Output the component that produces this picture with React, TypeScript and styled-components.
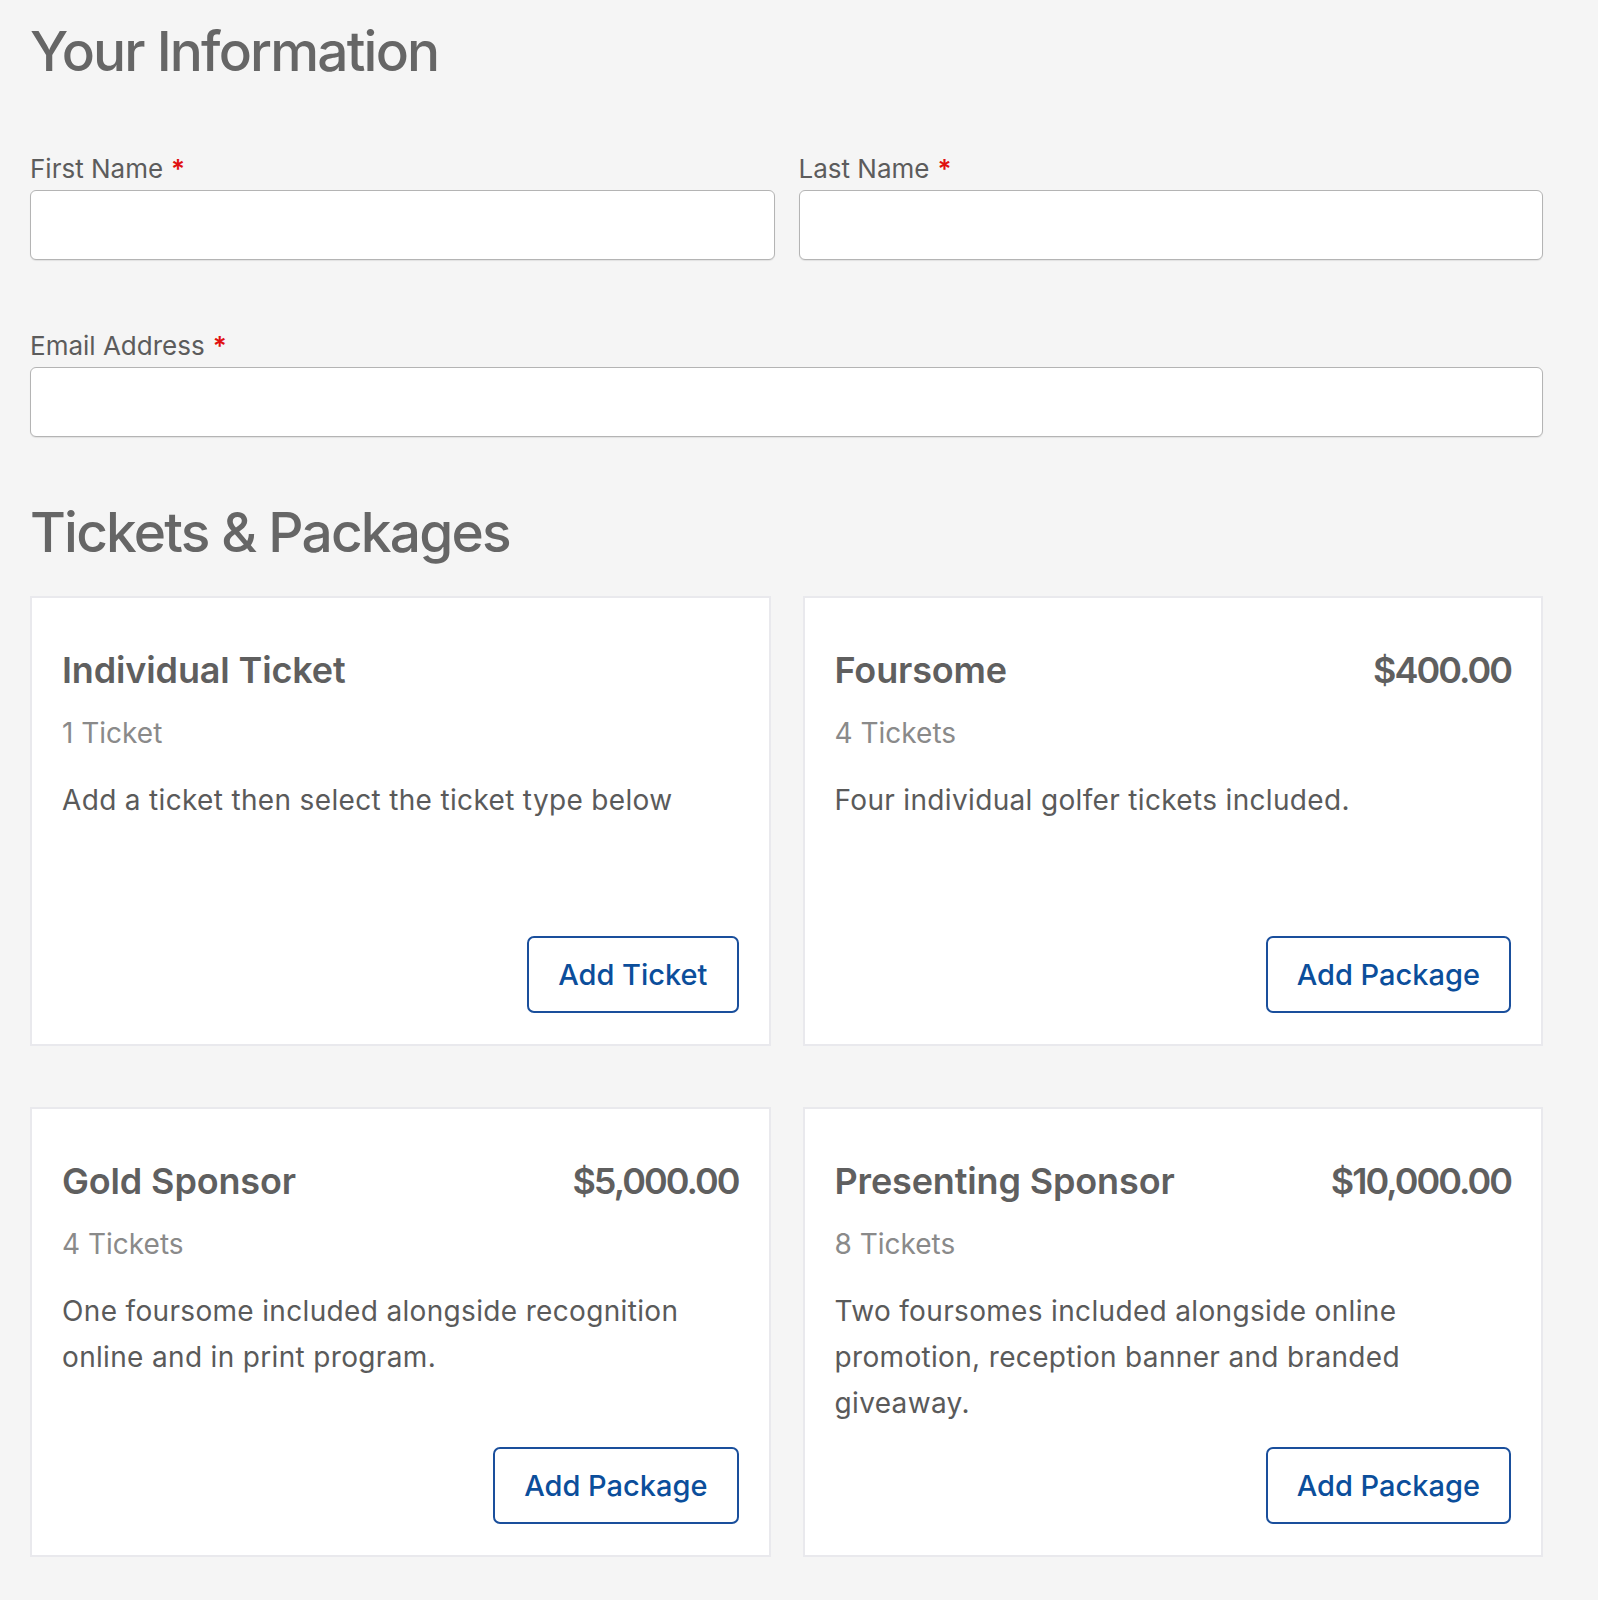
import React, { FC } from 'react';
import styled, { createGlobalStyle } from 'styled-components';

const GlobalStyle = createGlobalStyle`
  html, body {
    margin: 0;
    padding: 0;
    background: #f5f5f5;
  }
  body {
    font-family: Inter, "Noto Sans", "Liberation Sans", sans-serif;
    -webkit-font-smoothing: antialiased;
  }
  * {
    box-sizing: border-box;
  }
`;

const Page = styled.div`
  width: 1513px;
  margin-left: 30px;
  padding-top: 18px;
  padding-bottom: 43px;
`;

const SectionTitle = styled.h1<{ $gap: number }>`
  margin: 0 0 ${(p) => p.$gap}px;
  font-size: 55px;
  line-height: 66px;
  font-weight: 500;
  letter-spacing: -0.033em;
  color: #666666;
`;

const FieldRow = styled.div`
  display: grid;
  grid-template-columns: 1fr 1fr;
  column-gap: 24px;
  margin-bottom: 70px;
`;

const Field = styled.div`
  display: flex;
  flex-direction: column;
`;

const Label = styled.label`
  font-size: 26px;
  line-height: 32px;
  color: #5c5c5c;
  margin-bottom: 5px;
`;

const Required = styled.span`
  color: #e01010;
  margin-left: 8px;
  font-weight: 600;
`;

const TextInput = styled.input`
  height: 70px;
  width: 100%;
  background: #ffffff;
  border: 1.5px solid #b4b4b4;
  border-radius: 6px;
  box-shadow: 0 1px 1px rgba(0, 0, 0, 0.08);
  font-family: inherit;
  font-size: 26px;
  padding: 0 18px;
  outline: none;
`;

const CardGrid = styled.div`
  display: grid;
  grid-template-columns: 1fr 1fr;
  column-gap: 32px;
  row-gap: 61px;
`;

const Card = styled.div`
  display: flex;
  flex-direction: column;
  min-height: 450px;
  background: #ffffff;
  border: 2px solid #e9e9ed;
  padding: 50px 30px 31px;
`;

const CardHeader = styled.div`
  display: flex;
  justify-content: space-between;
  align-items: baseline;
  font-size: 36px;
  line-height: 44px;
  font-weight: 600;
  color: #5f5f5f;
`;

const Name = styled.span`
  letter-spacing: -0.004em;
`;

const Price = styled.span`
  letter-spacing: -0.055em;
`;

const TicketCount = styled.div`
  margin-top: 23px;
  font-size: 28px;
  line-height: 36px;
  color: #8a8a8a;
`;

const Description = styled.p`
  margin: 26px 0 0;
  font-size: 28px;
  line-height: 46px;
  letter-spacing: 0.012em;
  color: #5a5a5a;
  max-width: 620px;
`;

const Actions = styled.div`
  margin-top: auto;
  padding-top: 21px;
  display: flex;
  justify-content: flex-end;
`;

const OutlineButton = styled.button`
  height: 77px;
  padding: 0 29px;
  background: #ffffff;
  border: 2px solid #1a4f9c;
  border-radius: 7px;
  font-family: inherit;
  font-size: 29px;
  font-weight: 500;
  color: #0b4e9b;
  cursor: pointer;
`;

interface Offer {
  name: string;
  price?: string;
  tickets: string;
  text: string;
  action: string;
}

const offers: Offer[] = [
  {
    name: 'Individual Ticket',
    tickets: '1 Ticket',
    text: 'Add a ticket then select the ticket type below',
    action: 'Add Ticket',
  },
  {
    name: 'Foursome',
    price: '$400.00',
    tickets: '4 Tickets',
    text: 'Four individual golfer tickets included.',
    action: 'Add Package',
  },
  {
    name: 'Gold Sponsor',
    price: '$5,000.00',
    tickets: '4 Tickets',
    text: 'One foursome included alongside recognition online and in print program.',
    action: 'Add Package',
  },
  {
    name: 'Presenting Sponsor',
    price: '$10,000.00',
    tickets: '8 Tickets',
    text: 'Two foursomes included alongside online promotion, reception banner and branded giveaway.',
    action: 'Add Package',
  },
];

const OfferCard: FC<{ offer: Offer }> = ({ offer }) => (
  <Card>
    <CardHeader>
      <Name>{offer.name}</Name>
      {offer.price && <Price>{offer.price}</Price>}
    </CardHeader>
    <TicketCount>{offer.tickets}</TicketCount>
    <Description>{offer.text}</Description>
    <Actions>
      <OutlineButton>{offer.action}</OutlineButton>
    </Actions>
  </Card>
);

const App: FC = () => {
  return (
    <>
      <GlobalStyle />
      <Page>
        <SectionTitle $gap={69}>Your Information</SectionTitle>
        <FieldRow>
          <Field>
            <Label>
              First Name<Required>*</Required>
            </Label>
            <TextInput type="text" />
          </Field>
          <Field>
            <Label>
              Last Name<Required>*</Required>
            </Label>
            <TextInput type="text" />
          </Field>
        </FieldRow>
        <Field>
          <Label>
            Email Address<Required>*</Required>
          </Label>
          <TextInput type="email" />
        </Field>
        <SectionTitle $gap={31} style={{ marginTop: 62 }}>
          Tickets &amp; Packages
        </SectionTitle>
        <CardGrid>
          {offers.map((o) => (
            <OfferCard key={o.name} offer={o} />
          ))}
        </CardGrid>
      </Page>
    </>
  );
};

export default App;
